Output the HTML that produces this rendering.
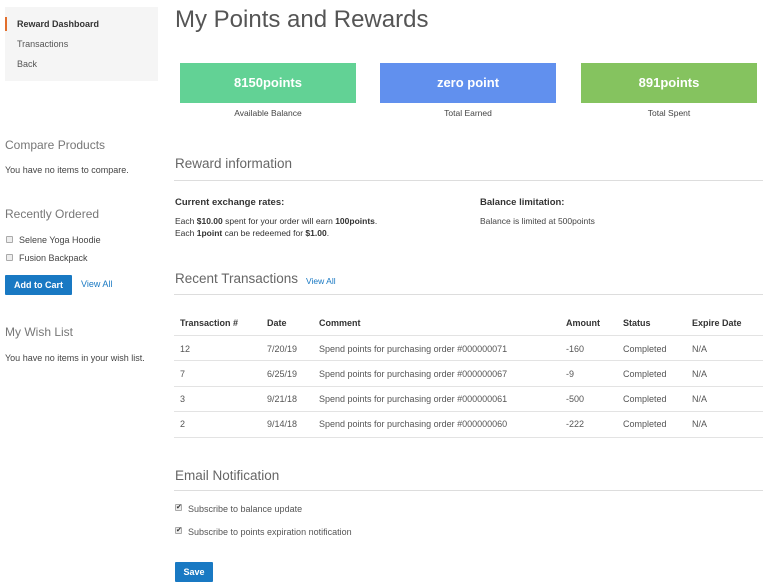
<!DOCTYPE html>
<html><head><meta charset="utf-8"><style>
*{margin:0;padding:0;box-sizing:border-box}
body{width:768px;height:588px;background:#fff;font-family:"Liberation Sans",sans-serif;color:#333;position:relative;overflow:hidden;font-size:9px}
.a{position:absolute;white-space:nowrap}
.h{font-size:13.5px;color:#666}
.b{font-weight:bold}
.box{position:absolute;top:63px;height:40px;width:176px;color:#fff;font-weight:bold;font-size:13px;text-align:center;line-height:40px}
.lbl{position:absolute;top:108px;width:176px;text-align:center;font-size:8.5px;color:#444}
.line{position:absolute;left:174px;width:589px;height:1px;background:#ddd}
.rl{position:absolute;left:174px;width:589px;height:1px;background:#e3e3e3}
.cb{position:absolute;width:7px;height:7px;border:1px solid #aaa;background:#eee;border-radius:1px}
.btn{position:absolute;background:#1979c3;color:#fff;font-weight:bold;text-align:center;border-radius:1px}
</style></head><body>
<div class="a" style="left:5px;top:7px;width:153px;height:74px;background:#f5f5f5"></div>
<div class="a" style="left:5px;top:17px;width:2px;height:14px;background:#e26e2c"></div>
<div class="a b" style="left:17px;top:19px;font-size:9px">Reward Dashboard</div>
<div class="a" style="left:17px;top:39px;color:#555">Transactions</div>
<div class="a" style="left:17px;top:59px;color:#555">Back</div>

<div class="a" style="left:175px;top:6px;font-size:24px;color:#555">My Points and Rewards</div>

<div class="box" style="left:180px;background:#62d295">8150points</div>
<div class="box" style="left:380px;background:#6190ee">zero point</div>
<div class="box" style="left:581px;background:#85c35f">891points</div>
<div class="lbl" style="left:180px">Available Balance</div>
<div class="lbl" style="left:380px">Total Earned</div>
<div class="lbl" style="left:581px">Total Spent</div>

<div class="a" style="left:5px;top:138px;font-size:12px;color:#777">Compare Products</div>
<div class="a" style="left:5px;top:165px;color:#444">You have no items to compare.</div>
<div class="a" style="left:5px;top:207px;font-size:12px;color:#777">Recently Ordered</div>
<div class="cb" style="left:6px;top:236px"></div>
<div class="a" style="left:19px;top:235px;color:#444">Selene Yoga Hoodie</div>
<div class="cb" style="left:6px;top:254px"></div>
<div class="a" style="left:19px;top:253px;color:#444">Fusion Backpack</div>
<div class="btn" style="left:5px;top:275px;width:67px;height:20px;line-height:20px;font-size:9px">Add to Cart</div>
<div class="a" style="left:81px;top:279px;color:#1979c3">View All</div>
<div class="a" style="left:5px;top:325px;font-size:12px;color:#777">My Wish List</div>
<div class="a" style="left:5px;top:353px;color:#444">You have no items in your wish list.</div>

<div class="a h" style="left:175px;top:156px">Reward information</div>
<div class="line" style="top:180px"></div>
<div class="a b" style="left:175px;top:197px;font-size:9.5px">Current exchange rates:</div>
<div class="a" style="left:175px;top:216px;font-size:8.5px">Each <b>$10.00</b> spent for your order will earn <b>100points</b>.</div>
<div class="a" style="left:175px;top:228px;font-size:8.5px">Each <b>1point</b> can be redeemed for <b>$1.00</b>.</div>
<div class="a b" style="left:480px;top:197px;font-size:9.5px">Balance limitation:</div>
<div class="a" style="left:480px;top:216px;font-size:8.5px;color:#444">Balance is limited at 500points</div>

<div class="a h" style="left:175px;top:271px">Recent Transactions</div>
<div class="a" style="left:306px;top:276px;font-size:8.5px;color:#1979c3">View All</div>
<div class="line" style="top:294px"></div>

<div class="a b" style="left:180px;top:318px">Transaction #</div>
<div class="a b" style="left:267px;top:318px">Date</div>
<div class="a b" style="left:319px;top:318px">Comment</div>
<div class="a b" style="left:566px;top:318px">Amount</div>
<div class="a b" style="left:623px;top:318px">Status</div>
<div class="a b" style="left:692px;top:318px">Expire Date</div>
<div class="rl" style="top:335px"></div>

<div class="a" style="left:180px;top:344px;color:#555">12</div><div class="a" style="left:267px;top:344px;color:#555">7/20/19</div><div class="a" style="left:319px;top:344px;color:#555">Spend points for purchasing order #000000071</div><div class="a" style="left:566px;top:344px;color:#555">-160</div><div class="a" style="left:623px;top:344px;color:#555">Completed</div><div class="a" style="left:692px;top:344px;color:#555">N/A</div>
<div class="rl" style="top:360px"></div>
<div class="a" style="left:180px;top:369px;color:#555">7</div><div class="a" style="left:267px;top:369px;color:#555">6/25/19</div><div class="a" style="left:319px;top:369px;color:#555">Spend points for purchasing order #000000067</div><div class="a" style="left:566px;top:369px;color:#555">-9</div><div class="a" style="left:623px;top:369px;color:#555">Completed</div><div class="a" style="left:692px;top:369px;color:#555">N/A</div>
<div class="rl" style="top:386px"></div>
<div class="a" style="left:180px;top:394px;color:#555">3</div><div class="a" style="left:267px;top:394px;color:#555">9/21/18</div><div class="a" style="left:319px;top:394px;color:#555">Spend points for purchasing order #000000061</div><div class="a" style="left:566px;top:394px;color:#555">-500</div><div class="a" style="left:623px;top:394px;color:#555">Completed</div><div class="a" style="left:692px;top:394px;color:#555">N/A</div>
<div class="rl" style="top:411px"></div>
<div class="a" style="left:180px;top:419px;color:#555">2</div><div class="a" style="left:267px;top:419px;color:#555">9/14/18</div><div class="a" style="left:319px;top:419px;color:#555">Spend points for purchasing order #000000060</div><div class="a" style="left:566px;top:419px;color:#555">-222</div><div class="a" style="left:623px;top:419px;color:#555">Completed</div><div class="a" style="left:692px;top:419px;color:#555">N/A</div>
<div class="rl" style="top:437px"></div>

<div class="a h" style="left:175px;top:468px">Email Notification</div>
<div class="line" style="top:490px"></div>
<div class="cb" style="left:175px;top:504px;font-size:7px;line-height:5px;color:#333">✔</div>
<div class="a" style="left:188px;top:504px;color:#555">Subscribe to balance update</div>
<div class="cb" style="left:175px;top:527px;font-size:7px;line-height:5px;color:#333">✔</div>
<div class="a" style="left:188px;top:527px;color:#555">Subscribe to points expiration notification</div>
<div class="btn" style="left:175px;top:562px;width:38px;height:20px;line-height:20px;font-size:9px">Save</div>
</body></html>
